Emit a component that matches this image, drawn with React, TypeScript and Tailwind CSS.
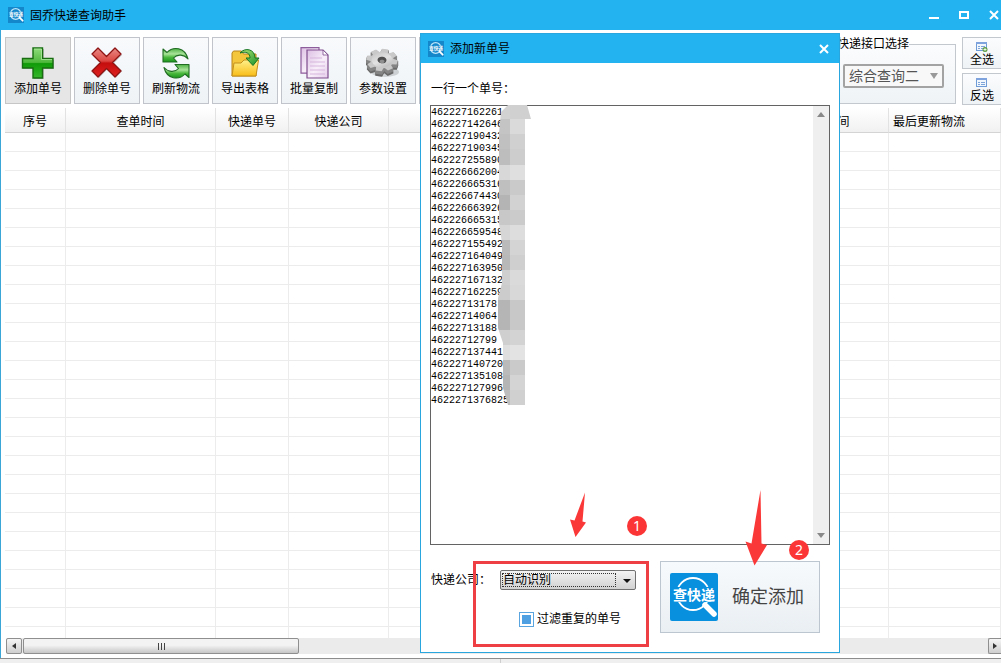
import React from "react";

const trackingNumbers = [
  "462227162261", "462227142646", "462227190432", "462227190345", "462227255890",
  "462226662004", "462226665316", "462226674430", "462226663926", "462226665315",
  "462226659548", "462227155492", "462227164049", "462227163950", "462227167132",
  "462227162259", "46222713178", "46222714064", "46222713188", "46222712799",
  "462227137441", "462227140720", "462227135108", "462227127996", "4622271376825",
];

const columns = [
  { title: "序号", width: "w-[61px]" },
  { title: "查单时间", width: "w-[150px]" },
  { title: "快递单号", width: "w-[73px]" },
  { title: "快递公司", width: "w-[100px]" },
  { title: "", width: "w-[187px]" },
  { title: "", width: "w-[187px]" },
  { title: "更新时间", width: "w-[126px]" },
  { title: "最后更新物流", width: "w-auto" },
];

function PlusIcon() {
  return (
    <svg viewBox="0 0 34 34" className="size-[34px]" aria-hidden="true">
      <defs>
        <linearGradient id="plus" x1="0" y1="0" x2="0" y2="1">
          <stop offset="0" stopColor="#8fdc7c" />
          <stop offset="0.48" stopColor="#4fb83c" />
          <stop offset="0.52" stopColor="#109a08" />
          <stop offset="1" stopColor="#35b82a" />
        </linearGradient>
      </defs>
      <path d="M13 2h10v11h10v9H23v10H13V22H2v-9h11z" fill="#000" opacity="0.2" />
      <path d="M12 1h9.500v10.500H32v9.500H21.500v10H12V21H1.500v-9.500H12z" fill="url(#plus)" stroke="#176d10" strokeWidth="1.4" />
      <path d="M13 2h7.500v10.500H31" fill="none" stroke="#b8efac" strokeWidth="0.9" opacity="0.8" />
    </svg>
  );
}

function DeleteIcon() {
  return (
    <svg viewBox="0 0 34 34" className="size-[34px]" aria-hidden="true">
      <defs>
        <linearGradient id="del" x1="0" y1="0" x2="0" y2="1">
          <stop offset="0" stopColor="#e88b86" />
          <stop offset="0.45" stopColor="#dc4742" />
          <stop offset="0.52" stopColor="#c40d0d" />
          <stop offset="1" stopColor="#e02222" />
        </linearGradient>
      </defs>
      <path d="M3 8l6-6 8.500 8.500L26 2l6 6-8 8 8 8-6 6.500-8.500-8.500L9 31l-6-6.500 8-8z" fill="#000" opacity="0.22" />
      <path d="M2 7l6-6 8.500 8.500L25 1l6 6-8.500 8.500L31 24l-6 6-8.500-8.500L8 30l-6-6 8.500-8.500z" fill="url(#del)" stroke="#8e1414" strokeWidth="1.3" strokeLinejoin="round" />
    </svg>
  );
}

function RefreshIcon() {
  return (
    <svg viewBox="0 0 34 34" className="size-[34px]" aria-hidden="true">
      <defs>
        <linearGradient id="ref" x1="0" y1="0" x2="0" y2="1">
          <stop offset="0" stopColor="#4db043" />
          <stop offset="0.4" stopColor="#a9e39a" />
          <stop offset="0.65" stopColor="#4bb93d" />
          <stop offset="1" stopColor="#17951a" />
        </linearGradient>
      </defs>
      <g fill="url(#ref)" stroke="#1f6c22" strokeWidth="1.1" strokeLinejoin="round">
        <path d="M4 2L8 5.500C14 -1 26 0 29 12C25 7.500 18.500 6.500 14.500 11L18 15H4Z" />
        <path d="M30 30.500L26 27C20 33.500 8 32.500 5 20.500C9 25 15.500 26 19.500 21.500L16 17.500H30Z" />
      </g>
    </svg>
  );
}

function ExportIcon() {
  return (
    <svg viewBox="0 0 34 34" className="size-[34px]" aria-hidden="true">
      <defs>
        <linearGradient id="fold" x1="0" y1="0" x2="0" y2="1">
          <stop offset="0" stopColor="#fff08a" />
          <stop offset="1" stopColor="#f8bd17" />
        </linearGradient>
        <linearGradient id="exparrow" x1="0" y1="0" x2="1" y2="1">
          <stop offset="0" stopColor="#b1e678" />
          <stop offset="1" stopColor="#159027" />
        </linearGradient>
      </defs>
      <path d="M4 29V6l1.500-2h8l2 3H28v22z" fill="#f3c63c" stroke="#b8841b" />
      <path d="M4 29l2-13h7l3-3h14.500L28 29z" fill="url(#fold)" stroke="#c4901d" strokeLinejoin="round" />
      <path d="M12 6c5-6 15-4 15 5h4l-6 7.500-7-7.500h4c0-5-4-7-10-5z" fill="url(#exparrow)" stroke="#177627" strokeLinejoin="round" />
    </svg>
  );
}

function CopyIcon() {
  return (
    <svg viewBox="0 0 34 34" className="size-[34px]" aria-hidden="true">
      <defs>
        <linearGradient id="page" x1="0" y1="0" x2="1" y2="1">
          <stop offset="0" stopColor="#dcbfe3" />
          <stop offset="0.55" stopColor="#f8effa" />
          <stop offset="1" stopColor="#e5cdea" />
        </linearGradient>
      </defs>
      <path d="M4 0.700h18v25.500H4z" fill="url(#page)" stroke="#8d5c9b" strokeWidth="1.2" />
      <path d="M10 3h16l5 5v23H10z" fill="url(#page)" stroke="#7e4c8d" strokeWidth="1.2" />
      <path d="M26 3v5h5z" fill="#fff" stroke="#7e4c8d" strokeWidth="0.8" />
      <path d="M13 11h12M13 15h15M13 19h15M13 23h15M13 27h15" stroke="#d6b5dd" />
    </svg>
  );
}

const teeth = [0, 45, 90, 135];

function GearIcon() {
  return (
    <svg viewBox="0 0 34 34" className="size-[34px]" aria-hidden="true">
      <defs>
        <linearGradient id="gear" gradientUnits="userSpaceOnUse" x1="-14" y1="-14" x2="14" y2="14">
          <stop offset="0" stopColor="#b9b9b9" />
          <stop offset="0.5" stopColor="#e2e2e2" />
          <stop offset="1" stopColor="#a2a2a2" />
        </linearGradient>
      </defs>
      <ellipse cx="19" cy="25" rx="14" ry="5" fill="#000" opacity="0.15" />
      {[5, 4, 3, 2, 1].map((depth) => (
        <g key={depth} transform={`translate(16 ${13 + depth}) scale(1 0.72) rotate(12)`} fill={depth > 3 ? "#6a6a6a" : "#858585"}>
          <circle r="11.500" />
          {teeth.map((a) => (
            <path key={a} d="M-3.500 -16h7l1 6v20l-1 6h-7l-1-6v-20z" transform={`rotate(${a})`} />
          ))}
        </g>
      ))}
      <g transform="translate(16 13) scale(1 0.72) rotate(12)">
        <circle r="11.500" fill="#cfcfcf" />
        {teeth.map((a) => (
          <path key={a} d="M-3 -15.500h6l1 6v19l-1 6h-6l-1-6v-19z" transform={`rotate(${a})`} fill="#c9c9c9" />
        ))}
        <circle r="10.500" fill="url(#gear)" />
        <circle r="4.500" fill="#4f4f4f" />
        <circle cx="0.500" cy="2" r="2.500" fill="#8f8f8f" />
      </g>
    </svg>
  );
}

function SearchLogo({ className, small }: { className: string; small?: boolean }) {
  return (
    <svg viewBox="0 0 48 48" className={className} aria-hidden="true">
      <rect width="48" height="48" rx={small ? 0 : 2} fill={small ? "#1487cb" : "#0890df"} />
      <circle cx="23" cy="21" r="16" fill="none" stroke={small ? "#bfe6fb" : "#fff"} strokeWidth={small ? 4 : 1.8} />
      <path d="M35 32l9 9" stroke="#fff" strokeWidth="5.500" strokeLinecap="round" />
      <rect x="2" y="14" width="44" height="15" fill={small ? "#1487cb" : "#0890df"} />
      <text x="24" y="27" textAnchor="middle" fill="#fff" fontSize="14" fontWeight="700" fontFamily="Noto Sans CJK SC, sans-serif">
        查快递
      </text>
    </svg>
  );
}

function ListIcon({ add }: { add?: boolean }) {
  return (
    <svg viewBox="0 0 12 10" className="h-[10px] w-3" aria-hidden="true">
      <rect x="0.500" y="0.500" width="10" height="8" fill="#f2f7fd" stroke="#6f9bd6" />
      <path d="M0 1h11" stroke="#7fa4dd" strokeWidth="2" />
      <path d="M2 4.500h2M5 4.500h4M2 6.500h2M5 6.500h4" stroke="#7fa4da" />
      {add && <circle cx="9" cy="7.500" r="2.500" fill="#5f9d42" />}
      {add && <path d="M9 6v3M7.500 7.500h3" stroke="#fff" strokeWidth="0.8" />}
    </svg>
  );
}

const tools = [
  { label: "添加单号", icon: <PlusIcon />, tone: "border-[#c6c6c6] bg-[#e6e6e6]" },
  { label: "删除单号", icon: <DeleteIcon />, tone: "border-[#c1c5cb] bg-linear-to-b from-[#f8fafc] to-[#eff3f6]" },
  { label: "刷新物流", icon: <RefreshIcon />, tone: "border-[#c1c5cb] bg-linear-to-b from-[#f8fafc] to-[#eff3f6]" },
  { label: "导出表格", icon: <ExportIcon />, tone: "border-[#c1c5cb] bg-linear-to-b from-[#f8fafc] to-[#eff3f6]" },
  { label: "批量复制", icon: <CopyIcon />, tone: "border-[#c1c5cb] bg-linear-to-b from-[#f8fafc] to-[#eff3f6]" },
  { label: "参数设置", icon: <GearIcon />, tone: "border-[#c1c5cb] bg-linear-to-b from-[#f8fafc] to-[#eff3f6]" },
];

function TitleBar() {
  return (
    <header className="flex h-[30px] shrink-0 items-center bg-[#22b3f0] pl-2">
      <SearchLogo small className="size-4" />
      <h1 className="ml-[6px] flex-1 pt-px text-xs">固乔快递查询助手</h1>
      <div className="flex items-center gap-5 pr-[2px]">
        <button aria-label="最小化" className="size-[10px]">
          <svg viewBox="0 0 10 10" className="size-[10px]"><path d="M0 8h10" stroke="#fff" strokeWidth="2" /></svg>
        </button>
        <button aria-label="最大化" className="size-[10px]">
          <svg viewBox="0 0 10 10" className="size-[10px]"><rect x="1" y="2" width="8" height="6" fill="none" stroke="#fff" strokeWidth="2" /></svg>
        </button>
        <button aria-label="关闭" className="size-[10px]">
          <svg viewBox="0 0 10 10" className="size-[10px]"><path d="M1 1l8 8M9 1l-8 8" stroke="#fff" strokeWidth="2" /></svg>
        </button>
      </div>
    </header>
  );
}

function Toolbar() {
  return (
    <div className="flex h-[78px] shrink-0 items-start overflow-hidden pt-[7px] pl-1">
      <nav className="flex gap-[3px]">
        {tools.map((t) => (
          <button key={t.label} className={`flex h-[67px] w-[66px] flex-col items-center border pt-[9px] ${t.tone}`}>
            {t.icon}
            <span className="text-xs leading-4">{t.label}</span>
          </button>
        ))}
      </nav>
      <div className="h-[67px] w-px ml-[3px] bg-[#c1c5cb]" />
      <div className="flex-1" />
      <fieldset className="mr-[6px] h-[67px] w-[127px] border border-[#c3c8ce] bg-linear-to-b from-[#fbfcfd] to-[#eff3f6] pl-[13px]">
        <legend className="-ml-[6px] text-xs leading-[14px] whitespace-nowrap">快递接口选择</legend>
        <div className="relative mt-[13px] h-6 w-[101px]">
          <select aria-label="快递接口选择" className="h-6 w-full appearance-none rounded-xs border-2 border-[#a3a3a3] bg-[#f8f8f8] pl-1 text-sm leading-5 text-[#555]">
            <option>综合查询二</option>
          </select>
          <svg viewBox="0 0 8 6" className="pointer-events-none absolute top-[9px] right-[6px] h-[6px] w-2"><path d="M0 0h8l-4 6z" fill="#999" /></svg>
        </div>
      </fieldset>
      <div className="flex flex-col gap-1">
        <button className="flex h-8 w-[39px] flex-col items-center border border-r-0 border-[#c3c8ce] bg-linear-to-b from-[#fbfcfd] to-[#eff3f6] pt-1">
          <ListIcon add />
          <span className="text-xs leading-4">全选</span>
        </button>
        <button className="flex h-8 w-[39px] flex-col items-center border border-r-0 border-[#c3c8ce] bg-linear-to-b from-[#fbfcfd] to-[#eff3f6] pt-1">
          <ListIcon />
          <span className="text-xs leading-4">反选</span>
        </button>
      </div>
    </div>
  );
}

function OrdersTable() {
  return (
    <div className="min-h-0 flex-1 overflow-hidden pl-1">
      <table className="w-full table-fixed border-separate border-spacing-0">
        <colgroup>
          {columns.map((c, i) => (
            <col key={i} className={c.width} />
          ))}
        </colgroup>
        <thead>
          <tr className="h-[25px]">
            {columns.map((c, i) => (
              <th
                key={i}
                className={`border-r border-b border-r-[#e2e2e2] border-b-[#d4d4d4] bg-linear-to-b from-white to-[#f1f1f1] px-0 pt-1 pb-0 text-xs leading-4 font-normal whitespace-nowrap ${i === columns.length - 1 ? "pl-1 text-left" : "text-center"}`}
              >
                {c.title}
              </th>
            ))}
          </tr>
        </thead>
        <tbody>
          {Array.from({ length: 27 }, (_, r) => (
            <tr key={r} className="h-[19px]">
              {columns.map((_, i) => (
                <td key={i} className="border-r border-b border-[#ececec] p-0" />
              ))}
            </tr>
          ))}
        </tbody>
      </table>
    </div>
  );
}

function HorizontalScroll() {
  return (
    <div className="ml-[5px] flex h-4 shrink-0 bg-[#ebebeb]">
      <button aria-label="向左滚动" className="flex w-4 items-center justify-center rounded-xs border border-[#8f8f8f] bg-linear-to-b from-[#f6f6f6] to-[#cfcfcf]">
        <svg viewBox="0 0 4 6" className="h-[6px] w-1"><path d="M4 0v6L0 3z" fill="#333" /></svg>
      </button>
      <div className="ml-px flex w-[276px] items-center justify-center gap-[2px] rounded-xs border border-[#8f8f8f] bg-linear-to-b from-[#f3f3f3] from-45% to-[#c6c6c6]">
        <span className="h-[7px] w-px bg-[#444]" />
        <span className="h-[7px] w-px bg-[#444]" />
        <span className="h-[7px] w-px bg-[#444]" />
      </div>
      <div className="flex-1" />
      <button aria-label="向右滚动" className="flex w-[13px] items-center justify-center rounded-l-xs border border-r-0 border-[#8f8f8f] bg-linear-to-b from-[#f6f6f6] to-[#cfcfcf]">
        <svg viewBox="0 0 4 6" className="h-[6px] w-1"><path d="M0 0v6l4-3z" fill="#333" /></svg>
      </button>
    </div>
  );
}

const mosaic = [
  [0, 14, "#d2d2d2", "#d0d0d0"],
  [14, 15, "#c4c4c4", "#dadada"],
  [29, 15, "#c0c0c0", "#d0d0d0"],
  [44, 16, "#bdbdbd", "#cdcdcd"],
  [60, 15, "#d8d8d8", "#dfdfdf"],
  [75, 15, "#bfbfbf", "#cacaca"],
  [90, 15, "#b4b4b4", "#d2d2d2"],
  [105, 15, "#c8c8c8", "#cbcbcb"],
  [120, 15, "#d6d6d6", "#dddddd"],
  [135, 15, "#bababa", "#d4d4d4"],
  [150, 15, "#b8b8b8", "#cfcfcf"],
  [165, 15, "#cfcfcf", "#dadada"],
  [180, 15, "#cccccc", "#d8d8d8"],
  [195, 30, "#b5b5b5", "#c8c8c8"],
  [225, 15, "#cfcfcf", "#d3d3d3"],
  [240, 15, "#dedede", "#e3e3e3"],
  [255, 15, "#bababa", "#cacaca"],
  [270, 15, "#b5b5b5", "#d4d4d4"],
  [285, 15, "#bdbdbd", "#d0d0d0"],
] as const;

function Mosaic() {
  return (
    <svg viewBox="0 0 34 302" className="pointer-events-none absolute -top-[3px] left-[67px] h-[302px] w-[34px]" aria-hidden="true">
      <defs>
        <clipPath id="smudge">
          <path d="M3 9L10 2H29L33 16H27V302H10L5 285V240L0 225V195L4 180V140L1 120V30Z" />
        </clipPath>
      </defs>
      <g clipPath="url(#smudge)">
        {mosaic.map(([y, h, a, b]) => (
          <g key={y}>
            <rect x="0" y={y + 2} width="12" height={h} fill={a} />
            <rect x="12" y={y + 2} width="22" height={h} fill={b} />
          </g>
        ))}
      </g>
    </svg>
  );
}

function AddDialog() {
  return (
    <section role="dialog" aria-labelledby="dialog-title" className="absolute top-[33px] left-[420px] w-[420px] border border-[#2aa6de] bg-white">
      <header className="flex h-[29px] items-center bg-[#22b3f0] pr-[10px] pl-[7px]">
        <SearchLogo small className="size-4" />
        <h2 id="dialog-title" className="ml-[6px] flex-1 pt-px text-xs">添加新单号</h2>
        <button aria-label="关闭对话框" className="size-[10px]">
          <svg viewBox="0 0 10 10" className="size-[10px]"><path d="M1 1l8 8M9 1l-8 8" stroke="#fff" strokeWidth="2" /></svg>
        </button>
      </header>
      <div className="px-[9px] pt-[18px] pb-[19px]">
        <label htmlFor="numbers" className="block pl-px text-xs leading-4">一行一个单号：</label>
        <div className="relative mt-2 flex h-[440px] border border-[#636363]">
          <textarea
            id="numbers"
            defaultValue={trackingNumbers.join("\n")}
            className="flex-1 resize-none overflow-hidden pt-px font-['Liberation_Mono',monospace] text-[10px] leading-3 outline-none"
          />
          <div className="flex w-4 flex-col items-center justify-between bg-[#efefef] py-[6px]">
            <svg viewBox="0 0 8 5" className="h-[5px] w-2"><path d="M4 0l4 5H0z" fill="#888" /></svg>
            <svg viewBox="0 0 8 5" className="h-[5px] w-2"><path d="M0 0h8L4 5z" fill="#888" /></svg>
          </div>
          <Mosaic />
        </div>
        <div className="mt-4 flex items-start justify-between pr-[10px]">
          <div className="pt-[9px]">
            <div className="flex h-5 items-center">
              <label htmlFor="company" className="w-[70px] pl-px text-xs whitespace-nowrap">快递公司：</label>
              <div className="relative h-5 w-[136px]">
                <select id="company" className="block h-5 w-full appearance-none rounded-xs border border-[#707070] bg-linear-to-b from-[#f3f3f3] to-[#d2d2d2] pl-[2px] text-xs leading-4">
                  <option>自动识别</option>
                </select>
                <span className="pointer-events-none absolute inset-y-[3px] left-[2px] w-[114px] border border-dotted border-[#333]" />
                <svg viewBox="0 0 8 4" className="pointer-events-none absolute top-[9px] right-[5px] h-1 w-2"><path d="M0 0h8L4 4z" fill="#111" /></svg>
              </div>
            </div>
            <label className="mt-[21px] ml-[89px] flex h-4 items-center gap-[3px] text-xs">
              <input type="checkbox" defaultChecked className="size-[15px] appearance-none border border-[#5aa5df] bg-[#4f9fe3] shadow-[inset_0_0_0_2px_white]" />
              过滤重复的单号
            </label>
          </div>
          <button className="flex h-[72px] w-[160px] items-center border border-[#bcc6d0] bg-linear-to-b from-[#f7fafc] to-[#eaeff3] pl-[9px]">
            <SearchLogo className="size-12" />
            <span className="ml-[14px] text-lg text-[#444]">确定添加</span>
          </button>
        </div>
      </div>
    </section>
  );
}

function Annotations() {
  return (
    <div className="pointer-events-none">
      <div className="absolute top-[561px] left-[473px] h-[86px] w-[176px] border-3 border-[#ee4044]" />
      <svg viewBox="0 0 18 46" className="absolute top-[492px] left-[569px] h-[46px] w-[18px]" aria-hidden="true">
        <path d="M16 0.500L13.500 29.500L17 30.500L6.500 45L1 27.500L5.500 28.500Z" fill="#fb3838" />
      </svg>
      <svg viewBox="0 0 22 76" className="absolute top-[490px] left-[745px] h-[76px] w-[22px]" aria-hidden="true">
        <path d="M15.500 0L16.500 53.500L22 55L9.500 75.500L0.500 51.500L6.500 53.500Z" fill="#fb3838" />
      </svg>
      <span className="absolute top-[516px] left-[627px] flex size-5 items-center justify-center rounded-full bg-[#fb3535] font-['Noto_Sans',sans-serif] text-sm leading-5 text-white">1</span>
      <span className="absolute top-[540px] left-[789px] flex size-5 items-center justify-center rounded-full bg-[#fb3535] font-['Noto_Sans',sans-serif] text-sm leading-5 text-white">2</span>
    </div>
  );
}

export default function App() {
  return (
    <div className="relative flex h-screen flex-col overflow-hidden bg-white font-['Liberation_Sans','Noto_Sans_CJK_SC',sans-serif] text-black">
      <TitleBar />
      <main className="flex min-h-0 flex-1 flex-col border-l border-[#3aa6d8]">
        <Toolbar />
        <OrdersTable />
        <HorizontalScroll />
        <div className="h-1 shrink-0" />
      </main>
      <footer className="flex h-[5px] shrink-0 border-t border-[#8c8c8c] bg-[#f0efef]">
        <div className="w-1/2 border-r border-[#cfcfcf]" />
      </footer>
      <AddDialog />
      <Annotations />
    </div>
  );
}
